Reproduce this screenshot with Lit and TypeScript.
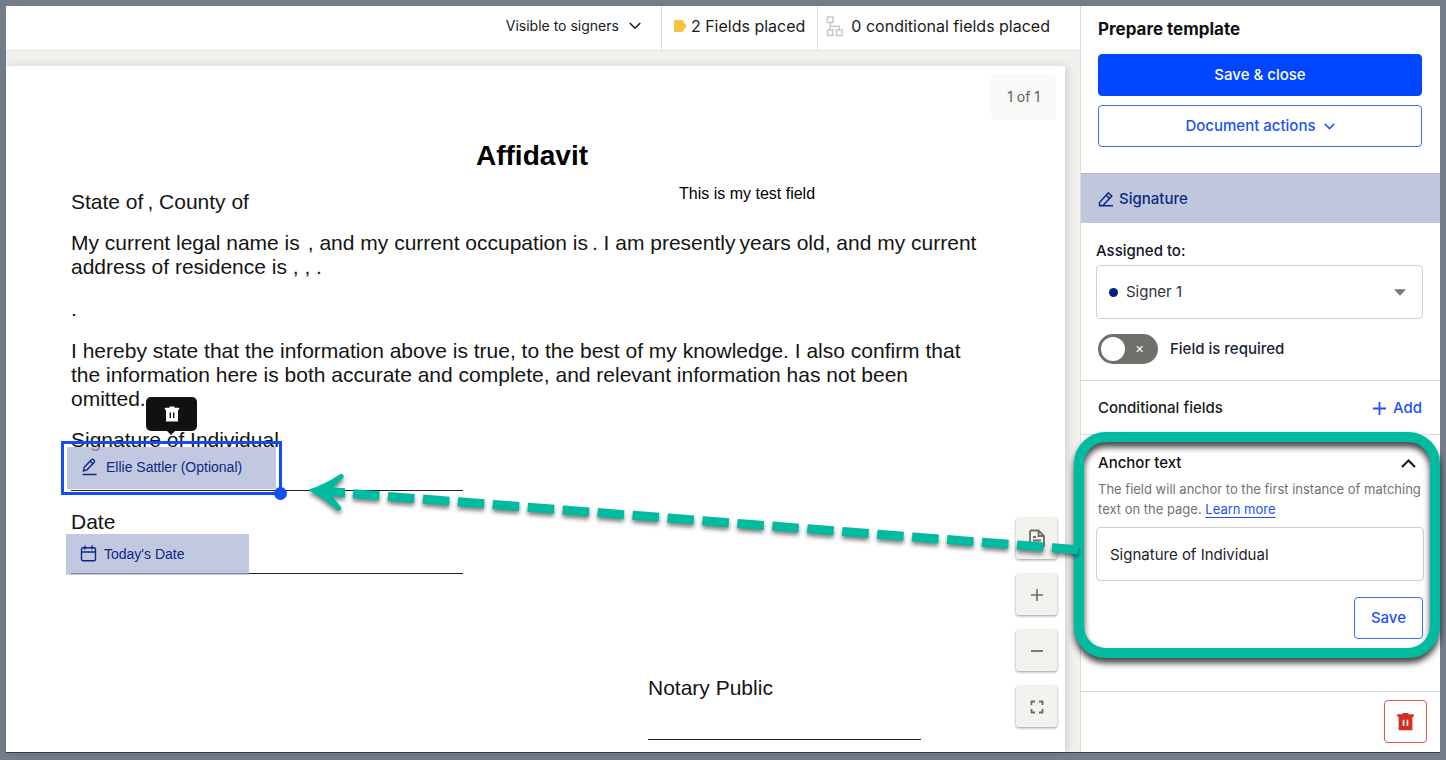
import { LitElement, html, css, svg } from "lit";
import { customElement, state } from "lit/decorators.js";

const trash = svg`<path d="M7.500 2.500h5v1.300h4.700v2h-1.200v11.700H4V5.800H2.800v-2h4.700zM7.600 8.500v5.500h1.400V8.500zM11 8.500v5.500h1.400V8.500z" fill="currentColor" fill-rule="evenodd"/>`;

@customElement("app-root")
export class AppRoot extends LitElement {
  @state() private required = false;

  static styles = css`
    :host {
      display: block;
      font-family: Inter, "Noto Sans", sans-serif;
      color: #1a1a1a;
      --blue: #0045ff;
      --line: #dcdcd6;
      --tint: #c0c6dc;
      --navy: #0b2a86;
      --teal: #00bba0;
    }
    * { box-sizing: border-box; }
    button, input, select { font: inherit; color: inherit; margin: 0; }
    button { cursor: pointer; }
    svg { display: block; flex: none; }
    p, h1, h2, h3 { margin: 0; font-weight: 400; }

    .frame {
      min-height: 100vh;
      padding: 6px 6px 7px;
      background: #737d89;
      display: flex;
    }
    .app {
      flex: 1;
      position: relative;
      display: grid;
      grid-template-columns: minmax(0, 1fr) 360px;
      background: #fff;
      border-bottom: 1px solid #3c4248;
    }
    .main { display: flex; flex-direction: column; min-width: 0; }

    .topbar {
      display: flex;
      justify-content: flex-end;
      height: 45px;
      border-bottom: 1px solid #e6e6e1;
    }
    .seg {
      display: flex;
      align-items: center;
      padding: 0 12px 4px;
      gap: 4px;
      font-size: 16px;
      white-space: nowrap;
    }
    .seg + .seg { border-left: 1px solid var(--line); }
    .seg.menu {
      background: none;
      border: 0;
      font-size: 14px;
      gap: 10px;
      padding: 0 20px 5px;
    }
    .seg.cond { padding: 0 30px 4px 8px; gap: 7px; }

    .canvas {
      flex: 1;
      display: flex;
      padding: 15px 15px 0 0;
      background: #f0f1ec;
    }
    .page {
      flex: 1;
      position: relative;
      background: #fff;
      box-shadow: 2px 0 8px rgba(0, 0, 0, 0.14);
      padding: 74px 72px 12px 65px;
      font-family: "Liberation Sans", Arial, sans-serif;
      font-size: 21px;
      line-height: 24px;
      color: #141414;
    }
    .title {
      font-size: 28px;
      line-height: 32px;
      font-weight: 700;
      text-align: center;
      margin-bottom: 18px;
      color: #000;
    }
    .para { margin-bottom: 17px; }
    .para.blank { margin: 18px 0; }
    .slot { padding-left: 4px; }
    .slot.wide { padding-left: 8px; }
    .rule { width: 392px; border-top: 1px solid #222; }
    .rule.sign { margin-top: 38px; margin-bottom: 19px; }
    .rule.date { margin-top: 39px; margin-bottom: 102px; }
    .notary { display: grid; gap: 39px; width: 345px; margin-left: auto; }
    .notary .rule { width: 273px; }

    .field {
      position: absolute;
      display: flex;
      align-items: center;
      background: rgba(171, 179, 210, 0.72);
      color: var(--navy);
      font-size: 14px;
      line-height: 16px;
      padding-bottom: 2px;
      white-space: nowrap;
    }
    .field.text {
      left: 673px;
      top: 120px;
      background: none;
      color: #000;
      font-size: 16px;
    }
    .field.date { left: 60px; top: 468px; width: 183px; height: 41px; padding-left: 14px; gap: 7px; }
    .selection {
      position: absolute;
      left: 55px;
      top: 375px;
      width: 221px;
      height: 54px;
      border: 3px solid #134ef0;
    }
    .selection .field { inset: 3px; padding-left: 14px; gap: 8px; }
    .handle {
      position: absolute;
      right: -8px;
      bottom: -8px;
      width: 13px;
      height: 13px;
      border-radius: 50%;
      background: #134ef0;
    }
    .tip {
      position: absolute;
      left: 82px;
      top: -47px;
      width: 51px;
      height: 34px;
      border: 0;
      border-radius: 5px;
      background: #111;
      color: #fff;
      display: grid;
      place-items: center;
      padding: 0;
    }
    .tip::after {
      content: "";
      position: absolute;
      top: 33px;
      left: 20px;
      border: 5px solid transparent;
      border-top-color: #111;
    }

    .counter {
      position: absolute;
      top: 8px;
      right: 9px;
      padding: 11px 16px;
      border-radius: 5px;
      background: #f9f9f7;
      font: 14px/24px Inter, "Noto Sans", sans-serif;
      color: #5d5d5a;
    }
    .tools {
      position: absolute;
      right: 8px;
      bottom: 25px;
      display: grid;
      gap: 15px;
    }
    .tool {
      width: 41px;
      height: 41px;
      border: 0;
      border-radius: 3px;
      padding: 0;
      background: #f2f2ee;
      color: #6b6b68;
      box-shadow: 0 1px 3px rgba(0, 0, 0, 0.4);
      display: grid;
      place-items: center;
    }

    .side {
      display: flex;
      flex-direction: column;
      border-left: 1px solid var(--line);
      font-size: 15px;
      line-height: 20px;
      min-width: 0;
    }
    .head { display: grid; gap: 9px; padding: 10px 18px 26px 17px; }
    .head h1 { font-size: 17px; line-height: 26px; font-weight: 700; color: #111; margin-bottom: 3px; }
    .btn {
      display: flex;
      align-items: center;
      justify-content: center;
      gap: 8px;
      height: 42px;
      border: 1px solid #3a6bf5;
      border-radius: 4px;
      background: #fff;
      color: #1c52f5;
      font-weight: 500;
      padding: 0 16px;
    }
    .btn.primary { background: var(--blue); border-color: var(--blue); color: #fff; }
    .band {
      display: flex;
      align-items: center;
      gap: 5px;
      height: 50px;
      padding-left: 17px;
      background: var(--tint);
      color: var(--navy);
      font-weight: 500;
      border-top: 1px solid #b4b8c8;
    }
    .assign { padding: 18px 17px 16px 15px; }
    .caption { font-weight: 500; display: block; margin-bottom: 4px; color: #14142a; }
    .select {
      display: flex;
      align-items: center;
      height: 54px;
      padding: 0 16px 0 12px;
      border: 1px solid #cfcfc9;
      border-radius: 4px;
      margin-bottom: 15px;
    }
    .dot { width: 9px; height: 9px; border-radius: 50%; background: #00227f; margin-right: 8px; }
    .select select {
      appearance: none;
      flex: 1;
      border: 0;
      padding: 0;
      background: none;
      color: #303044;
      outline: 0;
      height: 30px;
    }
    .toggle { display: flex; align-items: center; gap: 12px; padding-left: 2px; font-weight: 500; color: #20203a; }
    .toggle input {
      appearance: none;
      width: 60px;
      height: 30px;
      border-radius: 15px;
      background: #6f706b;
      position: relative;
      flex: none;
    }
    .toggle input::before {
      content: "";
      position: absolute;
      left: 3px;
      top: 3px;
      width: 24px;
      height: 24px;
      border-radius: 50%;
      background: #fff;
    }
    .toggle input::after {
      content: "✕";
      position: absolute;
      left: 37px;
      top: 5px;
      font-size: 11px;
      line-height: 20px;
      color: #fff;
    }
    .toggle input:checked { background: var(--blue); }
    .toggle input:checked::before { left: 33px; }
    .toggle input:checked::after { content: "✓"; left: 12px; }

    .row {
      display: flex;
      align-items: center;
      justify-content: space-between;
      padding: 17px 18px 16px 17px;
      border-top: 1px solid var(--line);
      font-weight: 500;
    }
    .add {
      display: flex;
      align-items: center;
      gap: 7px;
      border: 0;
      padding: 0;
      background: none;
      color: #1c52f5;
      font-weight: 500;
    }
    .anchor {
      position: relative;
      flex: 1;
      border-top: 1px solid var(--line);
      padding: 18px 16px 0 15px;
    }
    .anchor-head {
      display: flex;
      align-items: center;
      justify-content: space-between;
      width: 100%;
      border: 0;
      background: none;
      padding: 0 8px 0 2px;
      font-weight: 500;
      line-height: 20px;
      color: #111;
    }
    .hint { padding-left: 2px; margin: 6px 0 8px; font-size: 13px; color: #72726f; }
    .hint a { color: #1c52f5; text-underline-offset: 3px; }
    .anchor input {
      display: block;
      width: 100%;
      height: 54px;
      padding: 0 13px;
      border: 1px solid #cfcfc9;
      border-radius: 4px;
      color: #22222e;
      outline: 0;
    }
    .save { margin: 16px 1px 0 auto; }
    .ring {
      position: absolute;
      left: -7px;
      right: 0;
      top: -3px;
      height: 226px;
      border: 10px solid var(--teal);
      border-radius: 32px;
      filter: drop-shadow(0 5px 3px rgba(0, 0, 0, 0.75));
      pointer-events: none;
    }
    .foot {
      display: flex;
      justify-content: flex-end;
      padding: 8px 13px 9px;
      border-top: 1px solid var(--line);
    }
    .delete {
      width: 43px;
      height: 43px;
      padding: 0;
      display: grid;
      place-items: center;
      border: 1px solid #e2564a;
      border-radius: 4px;
      background: #fff;
      color: #d22f20;
    }
    .arrow {
      position: absolute;
      left: 294px;
      top: 460px;
      pointer-events: none;
      filter: drop-shadow(0 3px 2px rgba(0, 0, 0, 0.5));
    }
  `;

  render() {
    return html`
      <div class="frame">
        <div class="app">
          <main class="main">
            <div class="topbar">
              <button class="seg menu">
                Visible to signers
                <svg width="12" height="8" viewBox="0 0 12 8" fill="none" stroke="currentColor" stroke-width="1.6"><path d="M.8 1l5.200 5.200L11.200 1"/></svg>
              </button>
              <div class="seg">
                <svg width="13" height="14" viewBox="0 0 13 14"><path d="M1.500 1H8.500l4 6-4 6H1.500Q0 13 0 11.500v-9Q0 1 1.500 1z" fill="#f7c244"/></svg>
                2 Fields placed
              </div>
              <div class="seg cond">
                <svg width="18" height="21" viewBox="0 0 18 21" fill="none" stroke="#c9c9c3" stroke-width="1.500"><path d="M1.500 1h5.500v5.500H1.500zM1.500 14h5.500v5.500H1.500zM10.500 14h5.500v5.500h-5.500zM4.200 6.500V14M4.200 10.200h9V14"/></svg>
                0 conditional fields placed
              </div>
            </div>
            <div class="canvas">
              <article class="page">
                <h2 class="title">Affidavit</h2>
                <p class="para">State of<span class="slot"></span>, County of</p>
                <p class="para">
                  My current legal name is<span class="slot wide"></span>, and my current occupation is<span class="slot"></span>. I am presently<span class="slot"></span>years old, and my current<br />
                  address of residence is , , .
                </p>
                <p class="para blank">.</p>
                <p class="para">
                  I hereby state that the information above is true, to the best of my knowledge. I also confirm that<br />
                  the information here is both accurate and complete, and relevant information has not been<br />
                  omitted.
                </p>
                <p>Signature of Individual</p>
                <div class="rule sign"></div>
                <p>Date</p>
                <div class="rule date"></div>
                <div class="notary"><p>Notary Public</p><div class="rule"></div></div>

                <div class="field text">This is my test field</div>
                <div class="selection">
                  <div class="field">
                    <svg width="17" height="18" viewBox="0 0 17 18" fill="none" stroke="currentColor" stroke-width="1.400"><path d="M1.500 16.500h14M2.500 13l.8-3.800 7.200-7.400q1-.9 2 0l.6.600q.9 1 0 2L6 11.800zM9.300 3.200l2.600 2.600"/></svg>
                    Ellie Sattler (Optional)
                  </div>
                  <span class="handle"></span>
                  <button class="tip" aria-label="Delete field"><svg width="20" height="20" viewBox="0 0 20 20">${trash}</svg></button>
                </div>
                <div class="field date">
                  <svg width="17" height="17" viewBox="0 0 17 17" fill="none" stroke="currentColor" stroke-width="1.400"><rect x="1.500" y="2.700" width="14" height="13" rx="1.500"/><path d="M1.500 7h14M5 .5v4M12 .5v4"/></svg>
                  Today's Date
                </div>

                <div class="counter">1 of 1</div>
                <div class="tools">
                  <button class="tool" aria-label="Pages"><svg width="18" height="20" viewBox="0 0 18 20" fill="none" stroke="currentColor" stroke-width="1.800"><path d="M3.500 1.500h7L16 7v9.500q0 1.500-1.500 1.500h-11Q2 18 2 16.500V3q0-1.500 1.500-1.500zM10.500 1.500V7H16M5 8h3M5 11.500h8"/></svg></button>
                  <button class="tool" aria-label="Zoom in"><svg width="14" height="14" viewBox="0 0 14 14" fill="none" stroke="currentColor" stroke-width="1.600"><path d="M1 7h12M7 1v12"/></svg></button>
                  <button class="tool" aria-label="Zoom out"><svg width="14" height="14" viewBox="0 0 14 14" fill="none" stroke="currentColor" stroke-width="1.800"><path d="M1 7h12"/></svg></button>
                  <button class="tool" aria-label="Fit page"><svg width="14" height="14" viewBox="0 0 14 14" fill="none" stroke="currentColor" stroke-width="1.800"><path d="M1.500 5V1.500H5M9 1.500h3.500V5M12.500 9v3.500H9M5 12.500H1.500V9"/></svg></button>
                </div>
              </article>
            </div>
          </main>

          <aside class="side">
            <div class="head">
              <h1>Prepare template</h1>
              <button class="btn primary">Save &amp; close</button>
              <button class="btn">
                Document actions
                <svg width="11" height="7" viewBox="0 0 11 7" fill="none" stroke="currentColor" stroke-width="1.500"><path d="M.7.8l4.800 4.800L10.300.8"/></svg>
              </button>
            </div>
            <div class="band">
              <svg width="16" height="16" viewBox="0 0 16 16" fill="none" stroke="currentColor" stroke-width="1.500"><path d="M1 14.800h14M4.500 14.500H1.500v-3L10.300 1.800l3.500 3.300L5 14.500M8.200 4.200l3.300 3.200"/></svg>
              Signature
            </div>
            <div class="assign">
              <label class="caption" for="signer">Assigned to:</label>
              <div class="select">
                <span class="dot"></span>
                <select id="signer"><option>Signer 1</option></select>
                <svg width="12" height="7" viewBox="0 0 12 7"><path d="M0 .3h12L6 6.700z" fill="#777874"/></svg>
              </div>
              <label class="toggle">
                <input type="checkbox" role="switch" .checked=${this.required} @change=${() => (this.required = !this.required)} />
                Field is required
              </label>
            </div>
            <div class="row">
              <span>Conditional fields</span>
              <button class="add"><svg width="13" height="13" viewBox="0 0 13 13" fill="none" stroke="currentColor" stroke-width="1.800"><path d="M0 6.500h13M6.500 0v13"/></svg>Add</button>
            </div>
            <section class="anchor">
              <button class="anchor-head" aria-expanded="true">
                <span id="anchor-label">Anchor text</span>
                <svg width="15" height="9" viewBox="0 0 15 9" fill="none" stroke="currentColor" stroke-width="2"><path d="M1 8l6.500-6.500L14 8"/></svg>
              </button>
              <p class="hint">The field will anchor to the first instance of matching text on the page. <a href="#learn">Learn more</a></p>
              <input type="text" aria-labelledby="anchor-label" value="Signature of Individual" />
              <button class="btn save">Save</button>
              <div class="ring"></div>
            </section>
            <div class="foot">
              <button class="delete" aria-label="Delete"><svg width="23" height="23" viewBox="0 0 20 20">${trash}</svg></button>
            </div>
          </aside>

          <svg class="arrow" width="780" height="100" viewBox="300 466 780 100" aria-hidden="true">
            <path d="M353 493.700L1078 549.700" stroke="#00bba0" stroke-width="9" stroke-dasharray="26.500 8.550" fill="none"/>
            <path d="M309.500 489.200Q324 485 340.500 474Q344.500 473.500 343.500 477.500Q338 483.500 332.500 487.500L345 488.200V497.300L332 496.300Q336 500.500 341.300 507.500Q341.500 511.500 337.500 510.500Q324 499 309.500 490.800z" fill="#00bba0"/>
          </svg>
        </div>
      </div>
    `;
  }
}
